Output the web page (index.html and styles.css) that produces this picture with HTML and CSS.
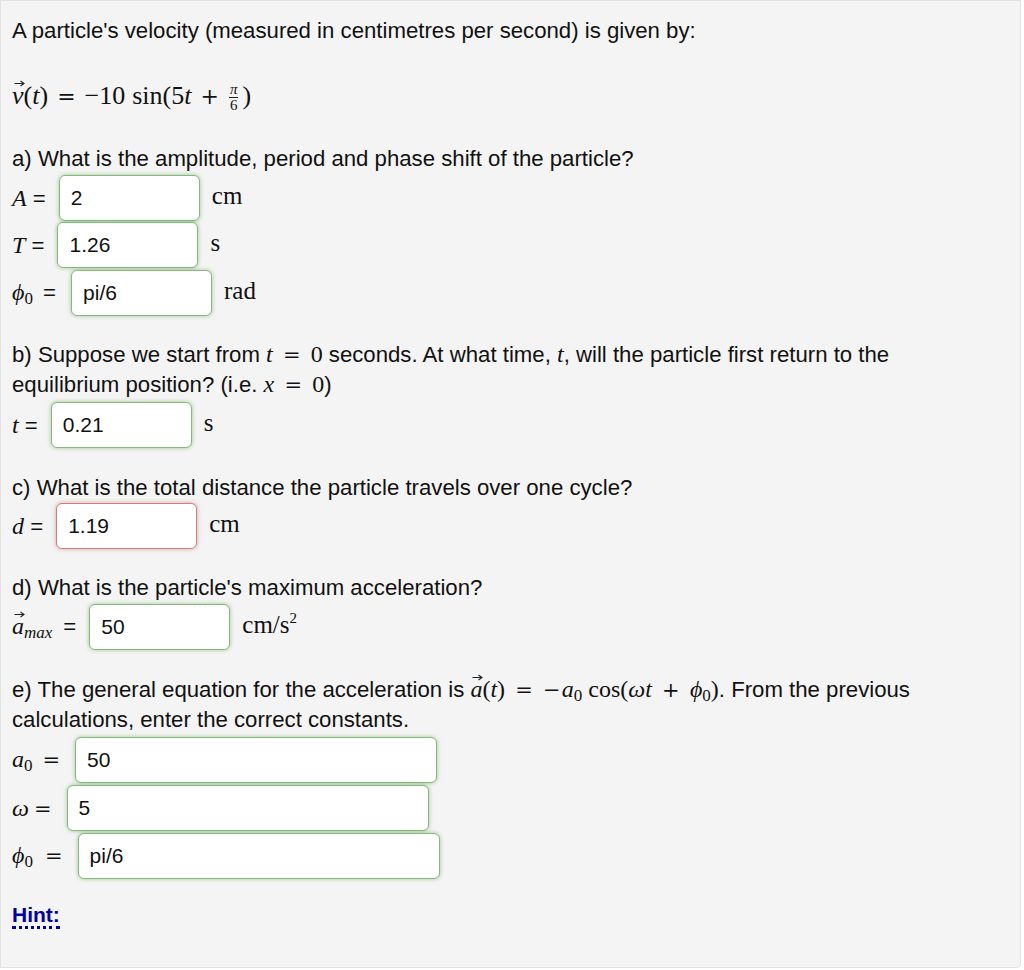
FILE: index.html
```html
<!DOCTYPE html>
<html>
<head>
<meta charset="utf-8">
<link rel="stylesheet" href="styles.css">
</head>
<body>
<div class="panel">
  <p class="line first">A particle's velocity (measured in centimetres per second) is given by:</p>
  <div class="equation">
    <span class="m vec">v<svg class="arrow" width="11" height="7" viewBox="0 0 11 7"><path d="M0.5 3.5 H9.5 M6.5 1 L10 3.5 L6.5 6" fill="none" stroke="#222" stroke-width="1.1"/></svg></span><span class="r">(</span><span class="m">t</span><span class="r">)</span><span class="op">=</span><span class="r">−10</span><span class="r sp">sin(5</span><span class="m">t</span><span class="op">+</span><span class="frac"><span class="num m">π</span><span class="den r">6</span></span><span class="r">)</span>
  </div>

  <p class="line q-a">a) What is the amplitude, period and phase shift of the particle?</p>
  <div class="row r-a"><span class="lbl"><span class="m big">A</span> =</span><span class="field ok">2</span><span class="unit">cm</span></div>
  <div class="row r-t"><span class="lbl"><span class="m big">T</span> =</span><span class="field ok">1.26</span><span class="unit">s</span></div>
  <div class="row r-p"><span class="lbl"><span class="m big">ϕ</span><sub class="r">0</sub> =</span><span class="field ok">pi/6</span><span class="unit">rad</span></div>

  <p class="line q-b">b) Suppose we start from <span class="m big">t</span> <span class="eq">=</span> <span class="r big">0</span> seconds. At what time, <span class="m big">t</span>, will the particle first return to the equilibrium position? (i.e. <span class="m big">x</span> <span class="eq">=</span> <span class="r big">0</span>)</p>
  <div class="row r-tt"><span class="lbl"><span class="m big">t</span> =</span><span class="field ok">0.21</span><span class="unit">s</span></div>

  <p class="line q-c">c) What is the total distance the particle travels over one cycle?</p>
  <div class="row r-d"><span class="lbl"><span class="m big">d</span> =</span><span class="field bad">1.19</span><span class="unit">cm</span></div>

  <p class="line q-d">d) What is the particle's maximum acceleration?</p>
  <div class="row r-am"><span class="lbl"><span class="m big vec">a<svg class="arrow" width="11" height="7" viewBox="0 0 11 7"><path d="M0.5 3.5 H9.5 M6.5 1 L10 3.5 L6.5 6" fill="none" stroke="#222" stroke-width="1.1"/></svg></span><sub class="m">max</sub><span class="eqs">=</span></span><span class="field ok">50</span><span class="unit">cm/s<sup>2</sup></span></div>

  <p class="line q-e">e) The general equation for the acceleration is <span class="m big vec">a<svg class="arrow" width="11" height="7" viewBox="0 0 11 7"><path d="M0.5 3.5 H9.5 M6.5 1 L10 3.5 L6.5 6" fill="none" stroke="#222" stroke-width="1.1"/></svg></span><span class="r big">(</span><span class="m big">t</span><span class="r big">)</span> <span class="eq">=</span> <span class="eq neg">−</span><span class="m big">a</span><sub class="r">0</sub> <span class="r big">cos(</span><span class="m big">ωt</span> <span class="eq">+</span> <span class="m big">ϕ</span><sub class="r">0</sub><span class="r big">)</span>. From the previous calculations, enter the correct constants.</p>
  <div class="row r-e1"><span class="lbl lbl-e"><span class="m big">a</span><sub class="r">0</sub><span class="eq eqe">=</span></span><span class="field ok wide">50</span></div>
  <div class="row r-e2"><span class="lbl lbl-e"><span class="m big">ω</span><span class="eq eqe">=</span></span><span class="field ok wide">5</span></div>
  <div class="row r-e3"><span class="lbl lbl-e"><span class="m big">ϕ</span><sub class="r">0</sub><span class="eq eqe">=</span></span><span class="field ok wide">pi/6</span></div>

  <p class="hint"><span class="hint-link">Hint:</span></p>
</div>
</body>
</html>
```

FILE: styles.css
```css
html, body {
  margin: 0;
  padding: 0;
  background: #ffffff;
}
body {
  font-family: "Liberation Sans", Arial, sans-serif;
  font-size: 22.2px;
  color: #111;
}
.panel {
  box-sizing: border-box;
  width: 1021px;
  height: 968px;
  background: #f4f4f4;
  border: 1px solid #e2e2e2;
  border-radius: 0 0 4px 0;
  padding: 0 0 0 11px;
  overflow: hidden;
}
.line {
  margin: 0;
  line-height: 30px;
  width: 940px;
}
.first { margin-top: 15px; }
.q-a { margin-top: 28px; }
.q-b { margin-top: 24px; }
.q-c { margin-top: 25px; }
.q-d { margin-top: 24px; }
.q-e { margin-top: 25px; }
.m { font-family: "Liberation Serif", "Times New Roman", serif; font-style: italic; }
.r { font-family: "Liberation Serif", "Times New Roman", serif; font-style: normal; }
.eq { font-family: "DejaVu Serif", serif; font-size: 21px; line-height: 1; }
.line .eq { margin: 0 4px; }
.line .eq.neg { margin: 0 1px 0 0; }
.big { font-size: 24px; line-height: 1; }
sub { font-size: 17px; vertical-align: -4px; line-height: 1; }
sup { font-size: 15px; vertical-align: 10px; line-height: 1; }
.vec { position: relative; display: inline-block; line-height: 1; }
.arrow { position: absolute; left: 2px; top: -3px; }
.equation {
  margin-top: 30px;
  height: 40px;
  display: flex;
  align-items: center;
  font-size: 26px;
  white-space: pre;
}
.equation .op { font-family: "DejaVu Serif", serif; font-size: 22px; margin: 0 9px; }
.equation .sp { margin-left: 7px; }
.frac {
  display: inline-flex;
  flex-direction: column;
  align-items: center;
  font-size: 15px;
  line-height: 13px;
  margin: 3px 4px 0 1px;
}
.frac .num { border-bottom: 1px solid #222; padding: 0 1px 1px; }
.frac .den { padding-top: 1px; }
.row {
  display: flex;
  align-items: center;
  height: 46px;
  margin-top: 2px;
}
.r-a { margin-top: 1px; }
.r-t { margin-top: 1px; }
.r-p { margin-top: 2px; }
.r-tt { margin-top: 2px; }
.r-d { margin-top: 0; }
.r-am { margin-top: 1px; }
.r-e1 { margin-top: 2px; }
.lbl { white-space: nowrap; margin-right: 13px; line-height: 1; }
.r-p .lbl { margin-right: 15px; }
.r-p .lbl sub { margin-right: 4px; }
.eqe { margin-left: 10px; }
.lbl-e { margin-right: 15px; }
.r-e2 .eqe { margin-left: 5px; }
.r-e3 .lbl sub { margin-right: 2px; }
.eqs { margin-left: 11px; }
.r-am .lbl { margin-right: 13px; }
.field {
  box-sizing: border-box;
  width: 141px;
  height: 46px;
  background: #fff;
  border: 1px solid #86b97d;
  border-radius: 6px;
  box-shadow: 0 0 4px rgba(90, 160, 70, 0.55);
  padding: 0 11px;
  display: flex;
  align-items: center;
  font-size: 21px;
}
.field.bad {
  border-color: #cf7f7f;
  box-shadow: 0 0 4px rgba(200, 80, 80, 0.5);
}
.field.wide { width: 362px; }
.unit {
  font-family: "Liberation Serif", "Times New Roman", serif;
  font-size: 25px;
  margin-left: 12px;
  margin-top: -4px;
}
.hint {
  margin: 21px 0 0 0;
  line-height: 30px;
}
.hint-link {
  font-weight: bold;
  font-size: 21px;
  color: #0000a8;
  border-bottom: 3px dotted #0000a8;
}
```
